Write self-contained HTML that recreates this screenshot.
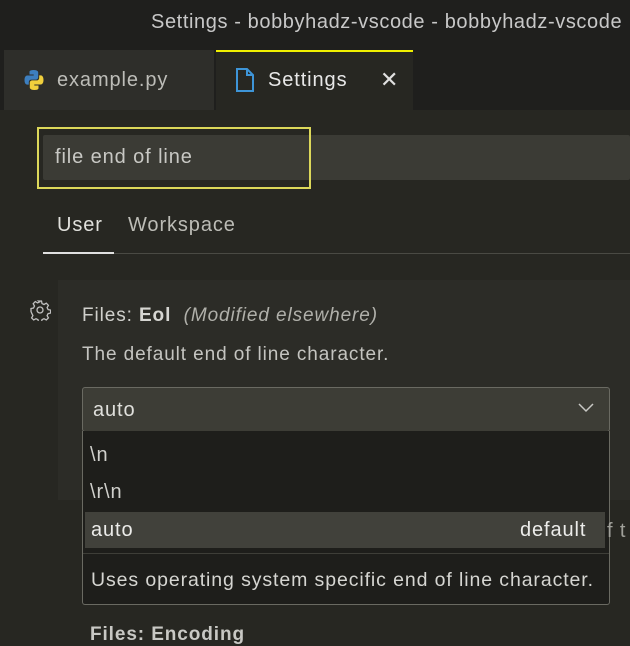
<!DOCTYPE html>
<html><head><style>
*{margin:0;padding:0;box-sizing:border-box}
body{width:630px;height:630px;overflow:hidden;background:#272722;font-family:"Liberation Sans","DejaVu Sans",sans-serif;position:relative;color:#cccccc;letter-spacing:0.9px}
.a{position:absolute;white-space:nowrap}
</style></head><body>
<div class="a" style="left:0;top:0;width:630px;height:50px;background:#1f1f1d"></div>
<div class="a" style="left:151px;top:11px;font-size:20px;color:#c8c8c8;letter-spacing:0.6px">Settings - bobbyhadz-vscode - bobbyhadz-vscode</div>
<div class="a" style="left:0;top:50px;width:630px;height:60px;background:#1f1f1d"></div>
<div class="a" style="left:4px;top:50px;width:210px;height:60px;background:#2e2e2a"></div>
<div class="a" style="left:216px;top:50px;width:197px;height:60px;background:#272722;border-top:2px solid #f0f000"></div>
<svg class="a" style="left:22px;top:68px" width="24" height="24" viewBox="0 0 24 24">
<path d="M11.5 2C7 2 7.5 4 7.5 4v2.5h4.2v1H5.5S2.5 7.2 2.5 12s2.7 4.6 2.7 4.6h1.6v-2.3s-.1-2.7 2.6-2.7h4.3s2.5 0 2.5-2.5V4.6S16.6 2 11.5 2z" fill="#3d7fbf"/>
<path d="M12.5 22c4.5 0 4-2 4-2v-2.5h-4.2v-1h6.2s3 .3 3-4.5-2.7-4.6-2.7-4.6h-1.6v2.3s.1 2.7-2.6 2.7h-4.3s-2.5 0-2.5 2.5v4.5S7.4 22 12.5 22z" fill="#f0cf3c"/>
</svg>
<div class="a" style="left:57px;top:69px;font-size:20px;color:#bdbdb8">example.py</div>
<svg class="a" style="left:234px;top:67px" width="22" height="26" viewBox="0 0 22 26">
<path d="M3 2h10l6 6v16H3z M13 2v6h6" fill="none" stroke="#3e95d8" stroke-width="2"/>
</svg>
<div class="a" style="left:268px;top:69px;font-size:20px;color:#e8e8e8">Settings</div>
<div class="a" style="left:380px;top:67px;font-size:22px;color:#e0e0e0">✕</div>
<div class="a" style="left:43px;top:135px;width:587px;height:45px;background:#3b3b35;border-radius:2px"></div>
<div class="a" style="left:37px;top:127px;width:274px;height:62px;border:2px solid #dcd85a"></div>
<div class="a" style="left:55px;top:146px;font-size:20px;color:#c8c8c4">file end of line</div>
<div class="a" style="left:57px;top:214px;font-size:20px;color:#e0e0dc">User</div>
<div class="a" style="left:128px;top:214px;font-size:20px;color:#bcbcb6">Workspace</div>
<div class="a" style="left:43px;top:253px;width:587px;height:1px;background:#4a4a44"></div>
<div class="a" style="left:43px;top:252px;width:71px;height:2px;background:#e0e0e0"></div>
<div class="a" style="left:58px;top:280px;width:572px;height:220px;background:#2c2c27"></div>
<svg class="a" style="left:29px;top:299px" width="22" height="22" viewBox="0 0 22 22"><g fill="none" stroke="#c0c0c0" stroke-width="1.3"><circle cx="11" cy="11" r="3"/><path d="M9.5 2h3l.5 2.5 2 1 2.3-1.3 2.1 2.1-1.3 2.3 1 2 2.5.5v3l-2.5.5-1 2 1.3 2.3-2.1 2.1-2.3-1.3-2 1-.5 2.5h-3l-.5-2.5-2-1-2.3 1.3-2.1-2.1 1.3-2.3-1-2L2 12.5v-3l2.5-.5 1-2-1.3-2.3 2.1-2.1 2.3 1.3 2-1z"/></g></svg>
<div class="a" style="left:82px;top:305px;font-size:19px;color:#d6d6d2"><span style="color:#d0d0cc">Files: </span><b>Eol</b>&nbsp; <i style="color:#b0b0aa">(Modified elsewhere)</i></div>
<div class="a" style="left:82px;top:344px;font-size:19px;color:#c4c4c0">The default end of line character.</div>
<div class="a" style="left:82px;top:387px;width:528px;height:45px;background:#3d3d36;border:1px solid #6a6a62;border-radius:3px"></div>
<div class="a" style="left:93px;top:399px;font-size:20px;color:#e0e0dc">auto</div>
<svg class="a" style="left:577px;top:402px" width="18" height="12" viewBox="0 0 18 12"><path d="M2 2l7 7 7-7" fill="none" stroke="#c8c8c4" stroke-width="1.5"/></svg>
<div class="a" style="left:82px;top:431px;width:528px;height:174px;background:#1e1e1b;border:1px solid #6a6a62;border-top:none;border-radius:0 0 3px 3px"></div>
<div class="a" style="left:90px;top:444px;font-size:20px;color:#d0d0cc">\n</div>
<div class="a" style="left:90px;top:481px;font-size:20px;color:#d0d0cc">\r\n</div>
<div class="a" style="left:85px;top:512px;width:520px;height:36px;background:#41413b"></div>
<div class="a" style="left:91px;top:519px;font-size:20px;color:#ececea">auto</div>
<div class="a" style="left:520px;top:519px;font-size:20px;color:#ececea">default</div>
<div class="a" style="left:607px;top:520px;font-size:20px;color:#a0a09a">f t</div>
<div class="a" style="left:83px;top:553px;width:526px;height:1px;background:#3e3e38"></div>
<div class="a" style="left:91px;top:569px;font-size:19.5px;color:#d6d6d2">Uses operating system specific end of line character.</div>
<div class="a" style="left:90px;top:624px;font-size:19px;color:#c8c8c4;font-weight:bold">Files: Encoding</div>
</body></html>
